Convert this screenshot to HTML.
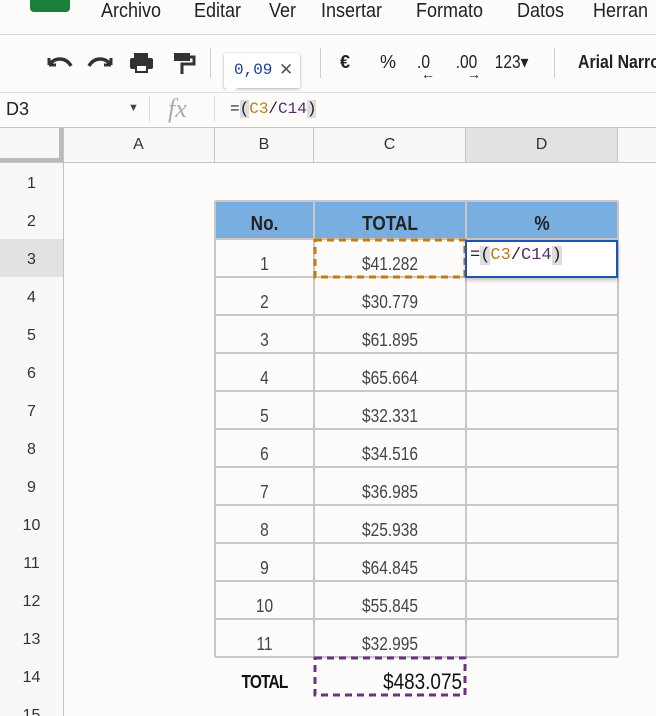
<!DOCTYPE html>
<html><head><meta charset="utf-8"><style>
html,body{margin:0;width:656px;height:716px;overflow:hidden}
body{background:#fdfcfa;font-family:"Liberation Sans",Arial,sans-serif;position:relative}
.a{position:absolute}
.menu span{position:absolute;top:0;font-size:20px;color:#222;transform:scaleX(.9);transform-origin:left}
.nar{transform:scaleX(.86)}
.rh{position:absolute;left:0;width:63px;height:38px;border-bottom:1px solid #c4c4c4;text-align:center;line-height:42px;font-size:16px;color:#333;background:#f8f8f7}
.ch{position:absolute;top:128px;height:34px;border-right:1px solid #c4c4c4;text-align:center;line-height:34px;font-size:16px;color:#333;background:#f8f8f7}
.cell{position:absolute;height:38px;line-height:50px;text-align:center;font-size:18px;color:#444}
.mono{font-family:"Liberation Mono","DejaVu Sans Mono",monospace}
</style></head><body>
<div class="a" style="left:30px;top:-6px;width:40px;height:18px;background:#188038;border-radius:4px"></div>
<div class="menu">
<span style="left:101px">Archivo</span><span style="left:194px">Editar</span><span style="left:269px">Ver</span><span style="left:321px">Insertar</span><span style="left:416px">Formato</span><span style="left:517px">Datos</span><span style="left:593px">Herran</span>
</div>
<div class="a" style="left:0;top:34px;width:656px;height:1px;background:#d6d6d6"></div>
<svg class="a" style="left:44px;top:50px" width="160" height="28" viewBox="0 0 160 28">
<path d="M5 15 L5 8 M5 15 L12 15" stroke="#333" stroke-width="3" fill="none"/>
<path d="M6 14 C11 7 22 7 27 16" stroke="#333" stroke-width="3.5" fill="none"/>
<path d="M67 15 L67 8 M67 15 L60 15" stroke="#333" stroke-width="3" fill="none"/>
<path d="M66 14 C61 7 50 7 45 16" stroke="#333" stroke-width="3.5" fill="none"/>
<rect x="90" y="3" width="14" height="5" fill="#333"/><rect x="86" y="8" width="23" height="11" rx="2" fill="#333"/><rect x="91" y="15" width="13" height="8" fill="#333"/><rect x="93" y="16" width="9" height="5" fill="#fff"/>
<rect x="130" y="3" width="16" height="8" fill="#333"/><path d="M146 7 H150 V14 H138 V24" stroke="#333" stroke-width="3" fill="none"/>
</svg>
<div class="a" style="left:210px;top:48px;width:1px;height:30px;background:#ccc"></div>
<div class="a" style="left:320px;top:48px;width:1px;height:30px;background:#ccc"></div>
<div class="a" style="left:340px;top:52px;font-size:18px;color:#222;font-weight:bold">€</div>
<div class="a" style="left:380px;top:52px;font-size:18px;color:#222">%</div>
<div class="a nar" style="left:416px;top:52px;font-size:18px;color:#222">.0</div>
<div class="a" style="left:421px;top:66px;font-size:14px;color:#222;font-weight:bold">←</div>
<div class="a nar" style="left:454px;top:52px;font-size:18px;color:#222">.00</div>
<div class="a" style="left:467px;top:66px;font-size:14px;color:#222;font-weight:bold">→</div>
<div class="a nar" style="left:492px;top:52px;font-size:18px;color:#222">123▾</div>
<div class="a" style="left:554px;top:48px;width:1px;height:30px;background:#ccc"></div>
<div class="a" style="left:578px;top:52px;font-size:18px;color:#222;font-weight:bold;white-space:nowrap;transform:scaleX(.88);transform-origin:left">Arial Narro</div>
<div class="a" style="left:224px;top:53px;width:76px;height:35px;background:#fff;box-shadow:0 1px 3px rgba(0,0,0,.3);border-radius:2px"></div>
<div class="a" style="left:226px;top:86px;width:0;height:0;border-right:14px solid transparent;border-top:10px solid #fff"></div>
<div class="a mono" style="left:234px;top:61px;font-size:16px;color:#1a3d8f">0,09</div>
<div class="a" style="left:279px;top:60px;font-size:17px;color:#555">✕</div>
<div class="a" style="left:0;top:92px;width:656px;height:1px;background:#ddd"></div>
<div class="a" style="left:6px;top:99px;font-size:18px;color:#222">D3</div>
<div class="a" style="left:128px;top:102px;font-size:11px;color:#444">▼</div>
<div class="a" style="left:149px;top:96px;width:1px;height:26px;background:#ddd"></div>
<div class="a" style="left:168px;top:94px;font-size:26px;color:#aaa;font-family:'Liberation Serif',serif;font-style:italic">fx</div>
<div class="a" style="left:214px;top:96px;width:1px;height:26px;background:#ddd"></div>
<div class="a mono" style="left:230px;top:100px;font-size:16px;color:#222">=<span style="background:#ddd">(</span><span style="color:#c27c0e">C3</span>/<span style="color:#5b2a6e">C14</span><span style="background:#ddd">)</span></div>
<div class="a" style="left:0;top:127px;width:656px;height:1px;background:#c4c4c4"></div>
<div class="a" style="left:0;top:128px;width:59px;height:30px;background:#f8f8f7;border-right:4px solid #bbb;border-bottom:4px solid #bbb"></div>
<div class="ch" style="left:63px;width:151px">A</div>
<div class="ch" style="left:215px;width:98px">B</div>
<div class="ch" style="left:314px;width:151px">C</div>
<div class="ch" style="left:466px;width:151px;background:#e2e2e2">D</div>
<div class="ch" style="left:618px;width:40px"></div>
<div class="a" style="left:0;top:162px;width:656px;height:1px;background:#c4c4c4"></div>
<div class="a" style="left:63px;top:128px;width:1px;height:588px;background:#c4c4c4"></div>
<div class="rh" style="top:163px">1</div><div class="rh" style="top:201px">2</div><div class="rh" style="top:239px;background:#e2e2e2">3</div><div class="rh" style="top:277px">4</div><div class="rh" style="top:315px">5</div><div class="rh" style="top:353px">6</div><div class="rh" style="top:391px">7</div><div class="rh" style="top:429px">8</div><div class="rh" style="top:467px">9</div><div class="rh" style="top:505px">10</div><div class="rh" style="top:543px">11</div><div class="rh" style="top:581px">12</div><div class="rh" style="top:619px">13</div><div class="rh" style="top:657px">14</div><div class="rh" style="top:695px;height:21px;border:0">15</div>
<div class="a" style="left:215px;top:201px;width:403px;height:38px;background:#78aee0"></div>
<svg class="a" style="left:0;top:0" width="656" height="716">
<g stroke="#c8c8c8" stroke-width="2">
<line x1="215" y1="201" x2="618" y2="201"/>
<line x1="215" y1="239" x2="618" y2="239"/><line x1="215" y1="277" x2="618" y2="277"/><line x1="215" y1="315" x2="618" y2="315"/><line x1="215" y1="353" x2="618" y2="353"/><line x1="215" y1="391" x2="618" y2="391"/><line x1="215" y1="429" x2="618" y2="429"/><line x1="215" y1="467" x2="618" y2="467"/><line x1="215" y1="505" x2="618" y2="505"/><line x1="215" y1="543" x2="618" y2="543"/><line x1="215" y1="581" x2="618" y2="581"/><line x1="215" y1="619" x2="618" y2="619"/><line x1="215" y1="657" x2="618" y2="657"/>
<line x1="215" y1="201" x2="215" y2="657"/><line x1="314" y1="201" x2="314" y2="657"/><line x1="466" y1="201" x2="466" y2="657"/><line x1="618" y1="201" x2="618" y2="657"/>
</g>
<rect x="315" y="240" width="150" height="37" fill="none" stroke="#c27c0e" stroke-width="3" stroke-dasharray="7 5"/>
<rect x="315" y="658" width="150" height="37" fill="none" stroke="#6a3280" stroke-width="3" stroke-dasharray="7 5"/>
</svg>
<div class="cell nar" style="left:215px;top:201px;width:99px;line-height:46px;font-weight:bold;color:#222;font-size:20px">No.</div>
<div class="cell nar" style="left:314px;top:201px;width:152px;line-height:46px;font-weight:bold;color:#222;font-size:20px">TOTAL</div>
<div class="cell nar" style="left:466px;top:201px;width:152px;line-height:46px;font-weight:bold;color:#222;font-size:20px">%</div>
<div class="cell nar" style="left:215px;top:239px;width:99px">1</div><div class="cell nar" style="left:314px;top:239px;width:152px">$41.282</div>
<div class="cell nar" style="left:215px;top:277px;width:99px">2</div><div class="cell nar" style="left:314px;top:277px;width:152px">$30.779</div>
<div class="cell nar" style="left:215px;top:315px;width:99px">3</div><div class="cell nar" style="left:314px;top:315px;width:152px">$61.895</div>
<div class="cell nar" style="left:215px;top:353px;width:99px">4</div><div class="cell nar" style="left:314px;top:353px;width:152px">$65.664</div>
<div class="cell nar" style="left:215px;top:391px;width:99px">5</div><div class="cell nar" style="left:314px;top:391px;width:152px">$32.331</div>
<div class="cell nar" style="left:215px;top:429px;width:99px">6</div><div class="cell nar" style="left:314px;top:429px;width:152px">$34.516</div>
<div class="cell nar" style="left:215px;top:467px;width:99px">7</div><div class="cell nar" style="left:314px;top:467px;width:152px">$36.985</div>
<div class="cell nar" style="left:215px;top:505px;width:99px">8</div><div class="cell nar" style="left:314px;top:505px;width:152px">$25.938</div>
<div class="cell nar" style="left:215px;top:543px;width:99px">9</div><div class="cell nar" style="left:314px;top:543px;width:152px">$64.845</div>
<div class="cell nar" style="left:215px;top:581px;width:99px">10</div><div class="cell nar" style="left:314px;top:581px;width:152px">$55.845</div>
<div class="cell nar" style="left:215px;top:619px;width:99px">11</div><div class="cell nar" style="left:314px;top:619px;width:152px">$32.995</div>
<div class="cell nar" style="left:215px;top:657px;width:99px;font-weight:bold;color:#111;font-size:18px;letter-spacing:-1px">TOTAL</div>
<div class="cell" style="left:314px;top:657px;width:148px;text-align:right;color:#111;font-size:22px;line-height:50px;transform:scaleX(.86);transform-origin:right">$483.075</div>
<div class="a" style="left:465px;top:240px;width:149px;height:34px;border:2px solid #1a56b0;background:#fff;box-shadow:0 2px 4px rgba(0,0,0,.25)"></div>
<div class="a mono" style="left:470px;top:246px;font-size:17px;color:#222">=<span style="background:#ddd">(</span><span style="color:#c27c0e">C3</span>/<span style="color:#5b2a6e">C14</span><span style="background:#ddd">)</span></div>
</body></html>
